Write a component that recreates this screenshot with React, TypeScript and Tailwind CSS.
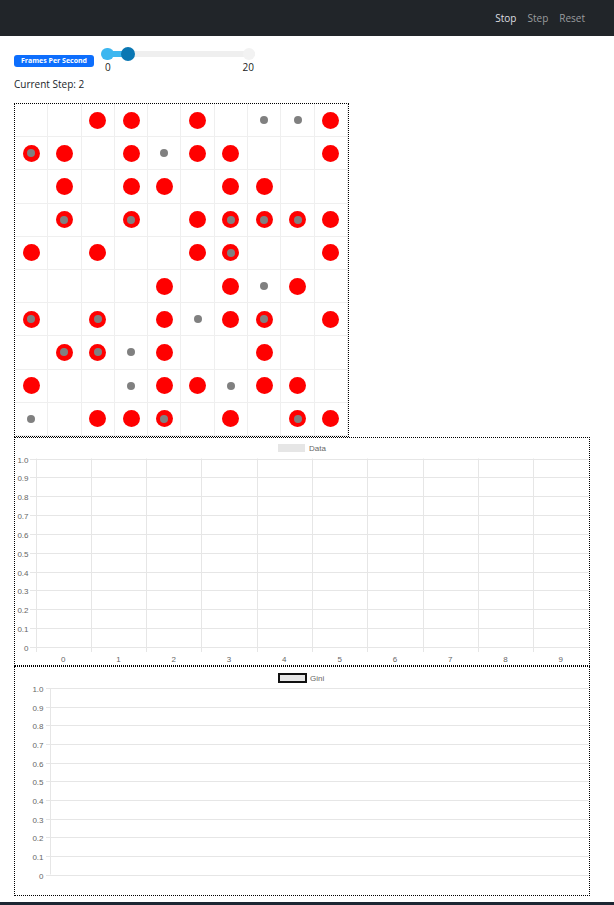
const rows = [
  "..RR.R.ggR",
  "BR.RgRR..R",
  ".R.RR.RR..",
  ".B.B.RBBBR",
  "R.R..RB..R",
  "....R.RgR.",
  "B.B.RgRB.R",
  ".BBgR..R..",
  "R..gRRgRR.",
  "g.RRB.R.BR",
];

const yLabels = ["1.0", "0.9", "0.8", "0.7", "0.6", "0.5", "0.4", "0.3", "0.2", "0.1", "0"];

function Cell({ kind }: { kind: string }) {
  return (
    <div className="relative flex items-center justify-center border-r border-b border-[#efefef]">
      {(kind === "R" || kind === "B") && <div className="h-[17px] w-[17px] rounded-full bg-[#ff0000]" />}
      {(kind === "g" || kind === "B") && (
        <div className="absolute h-[8px] w-[8px] rounded-full bg-[#808080]" />
      )}
    </div>
  );
}

function DataChart() {
  const left = 20.5;
  const right = 573.5;
  const top = 20.5;
  const bottom = 209;
  const step = (bottom - top) / 10;
  const colW = (right - left) / 10;
  return (
    <svg width="574" height="227" className="block" fontFamily="'Liberation Sans', Arial, sans-serif">
      <rect x="263" y="6" width="27" height="8" fill="#e6e6e6" />
      <text x="294" y="13" fontSize="8" fill="#666">Data</text>
      {yLabels.map((l, i) => {
        const y = Math.round(top + i * step) + 0.5;
        return (
          <g key={l}>
            <line x1="15" x2={right} y1={y} y2={y} stroke="#e6e6e6" strokeWidth="1" />
            <text x="13.5" y={y + 3} fontSize="8" fill="#666" textAnchor="end">{l}</text>
          </g>
        );
      })}
      {Array.from({ length: 11 }).map((_, j) => {
        const x = Math.round(left + j * colW) + 0.5;
        return <line key={j} x1={x} x2={x} y1={top} y2={bottom + 5} stroke="#e6e6e6" strokeWidth="1" />;
      })}
      {Array.from({ length: 10 }).map((_, j) => (
        <text key={j} x={left + (j + 0.5) * colW} y="223.5" fontSize="8" fill="#666" textAnchor="middle">
          {j}
        </text>
      ))}
    </svg>
  );
}

function GiniChart() {
  const left = 35.5;
  const right = 573.5;
  const top = 21;
  const bottom = 207.5;
  const step = (bottom - top) / 10;
  return (
    <svg width="574" height="228" className="block" fontFamily="'Liberation Sans', Arial, sans-serif">
      <rect x="264" y="7" width="27" height="8" fill="#e6e6e6" stroke="#111" strokeWidth="2" />
      <text x="295" y="14" fontSize="8" fill="#666">Gini</text>
      {yLabels.map((l, i) => {
        const y = Math.round(top + i * step) + 0.5;
        return (
          <g key={l}>
            <line x1="31" x2={right} y1={y} y2={y} stroke="#e6e6e6" strokeWidth="1" />
            <text x="28.5" y={y + 3} fontSize="8" fill="#666" textAnchor="end">{l}</text>
          </g>
        );
      })}
      <line x1={left} x2={left} y1={top} y2={bottom} stroke="#e6e6e6" strokeWidth="1" />
    </svg>
  );
}

function FpsSlider() {
  return (
    <div className="ml-[7px] flex w-[154px] flex-col pt-[11px]">
      {/* track with handles on top */}
      <div className="relative flex h-[14px] items-center">
        <div className="h-[6px] w-full rounded-full bg-[#efefef]" />
        <div className="absolute left-[6px] h-[6px] w-[22px] bg-[#3db7f0]" />
        <div className="absolute left-0 h-[12px] w-[13px] rounded-full bg-[#3db7f0]" />
        <div className="absolute left-[20px] h-[14px] w-[14px] rounded-full bg-[#0a77b3]" />
        <div className="absolute right-0 h-[12px] w-[12px] rounded-full bg-[#f2f2f2]" />
      </div>
      <div className="flex justify-between pl-[4px] pr-[1px] text-[10px] leading-[12px] text-[#222]">
        <span>0</span>
        <span>20</span>
      </div>
    </div>
  );
}

export default function App() {
  return (
    <div className="min-h-[905px] bg-white font-['Open_Sans','Noto_Sans',sans-serif] text-[#212529]">
      <nav className="flex h-[36px] items-center justify-end gap-[11px] bg-[#212529] pr-[29px] text-[10px]">
        <span className="text-[#dedfe0]">Stop</span>
        <span className="text-[#9a9c9f]">Step</span>
        <span className="text-[#9a9c9f]">Reset</span>
      </nav>

      <div className="px-[14px]">
        <div className="flex h-[41px] items-start">
          <span className="mt-[19px] flex h-[12px] w-[80px] items-center justify-center rounded-[3px] bg-[#0d6efd] text-[7px] font-bold text-white">
            Frames Per Second
          </span>
          <FpsSlider />
        </div>

        <div className="text-[10px] leading-[14px]">Current Step: 2</div>

        <div className="mt-[12px] grid h-[334px] w-[335px] grid-cols-10 grid-rows-10 border border-dotted border-black">
          {rows.map((r, i) => r.split("").map((c, j) => <Cell key={`${i}-${j}`} kind={c} />))}
        </div>

        <div className="w-[576px] border border-dotted border-black">
          <DataChart />
        </div>
        <div className="w-[576px] border border-dotted border-black">
          <GiniChart />
        </div>
      </div>

      <div className="mt-[6px] h-[20px] bg-[#1c2733]" />
    </div>
  );
}
